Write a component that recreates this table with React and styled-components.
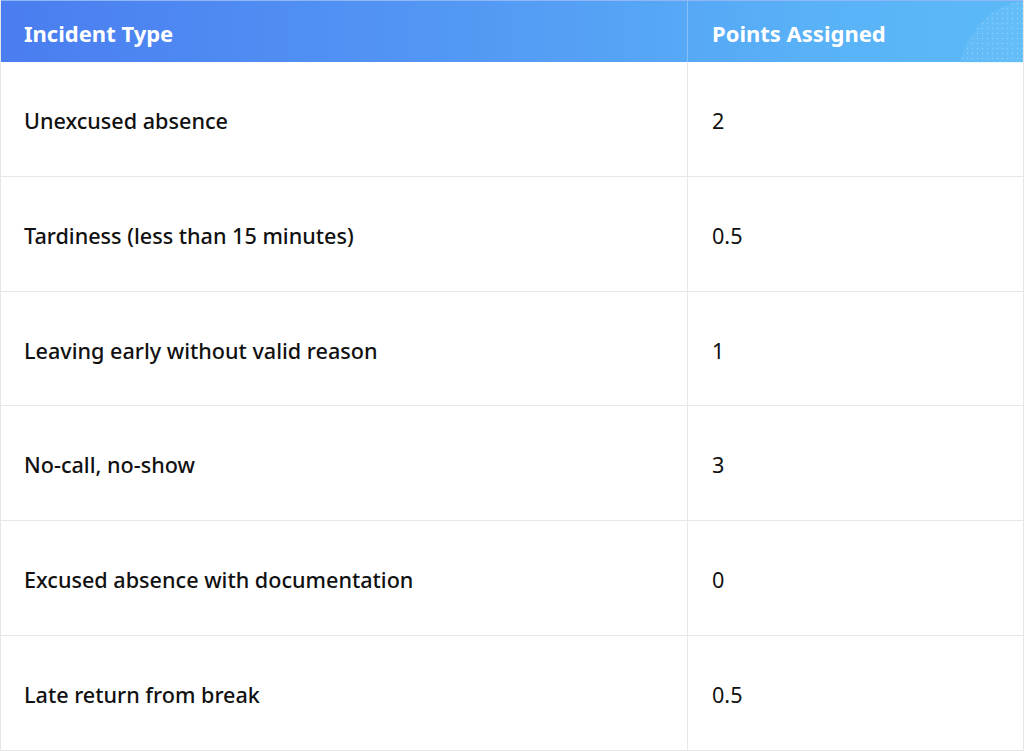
import React from "react";
import styled, { createGlobalStyle } from "styled-components";

const GlobalStyle = createGlobalStyle`
  html, body {
    margin: 0;
    padding: 0;
    background: #fff;
  }
  body {
    font-family: "Noto Sans", "Open Sans", sans-serif;
  }
`;

const rows = [
  { type: "Unexcused absence", points: "2" },
  { type: "Tardiness (less than 15 minutes)", points: "0.5" },
  { type: "Leaving early without valid reason", points: "1" },
  { type: "No-call, no-show", points: "3" },
  { type: "Excused absence with documentation", points: "0" },
  { type: "Late return from break", points: "0.5" },
];

const blob = "M64 0 L64 62 L0 62 C6 40 18 20 38 8 C46 4 54 1 64 0 Z";

const App = () => {
  return (
    <>
      <GlobalStyle />
      <Table>
        <Header>
          <Dots width="64" height="62" viewBox="0 0 64 62">
            <defs>
              <pattern id="dot" width="5" height="5" patternUnits="userSpaceOnUse">
                <circle cx="2.5" cy="2.5" r="0.7" fill="#ffffff" />
              </pattern>
            </defs>
            <path d={blob} fill="#8ad0fb" opacity="0.18" />
            <path d={blob} fill="url(#dot)" opacity="0.3" />
          </Dots>
          <HeadCell>Incident Type</HeadCell>
          <HeadCell $divider>Points Assigned</HeadCell>
        </Header>
        {rows.map((row, i) => (
          <Row key={i} $first={i === 0}>
            <TypeCell>{row.type}</TypeCell>
            <PointsCell>{row.points}</PointsCell>
          </Row>
        ))}
      </Table>
    </>
  );
};

export default App;

const Table = styled.div`
  width: 1024px;
  height: 751px;
  box-sizing: border-box;
  display: flex;
  flex-direction: column;
  border-left: 1px solid #e6e6e6;
  border-right: 1px solid #e6e6e6;
  border-bottom: 1px solid #e6e6e6;
  overflow: hidden;
`;

const Header = styled.div`
  position: relative;
  height: 62px;
  flex: 0 0 62px;
  display: grid;
  grid-template-columns: 687px 1fr;
  background: linear-gradient(90deg, #4a7df0 0%, #5398f4 45%, #59b2f7 80%, #5cbaf8 100%);
  border-top: 1px solid #8fb6f7;
  box-sizing: border-box;
  margin: 0 -1px;
`;

const Dots = styled.svg`
  position: absolute;
  right: 0;
  top: 0;
  pointer-events: none;
`;

const HeadCell = styled.div`
  display: flex;
  align-items: center;
  padding-left: 24px;
  padding-top: 2px;
  color: #fff;
  font-size: 22px;
  font-weight: 700;
  border-left: ${(p) => (p.$divider ? "1px solid rgba(255,255,255,0.28)" : "none")};
  position: relative;
`;

const Row = styled.div`
  flex: 1 1 0;
  display: grid;
  grid-template-columns: 686px 1fr;
  border-top: ${(p) => (p.$first ? "none" : "1px solid #e8e8e8")};
`;

const Cell = styled.div`
  display: flex;
  align-items: center;
  padding-left: 23px;
  padding-top: 3px;
  color: #111;
  font-size: 21.6px;
`;

const TypeCell = styled(Cell)`
  font-weight: 500;
`;

const PointsCell = styled(Cell)`
  border-left: 1px solid #e8e8e8;
  padding-left: 24px;
  font-weight: 400;
`;
